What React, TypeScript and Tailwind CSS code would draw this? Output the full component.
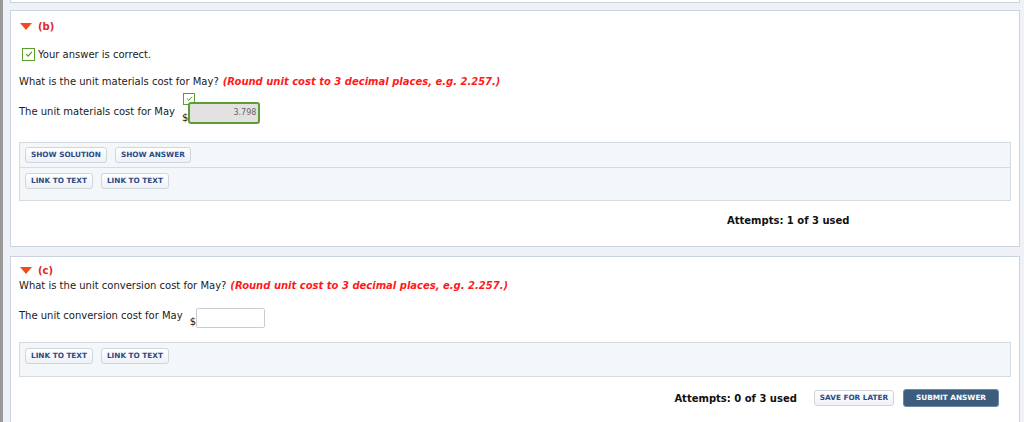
import React from 'react';

const font = { fontFamily: '"DejaVu Sans", Verdana, sans-serif' };

const Triangle = () => (
  <svg width="12" height="7" viewBox="0 0 12 7" className="shrink-0">
    <polygon points="0,0 12,0 6,7" fill="#f24a1d" />
  </svg>
);

const CheckBox: React.FC<{ size: number }> = ({ size }) => (
  <span
    className="inline-flex items-center justify-center border border-[#5c9e2e] bg-white shrink-0"
    style={{ width: size, height: size }}
  >
    <svg width={size - 5} height={size - 5} viewBox="0 0 10 10">
      <path d="M1.5 5.2 L4 7.6 L8.6 2.4" fill="none" stroke="#4e9a2a" strokeWidth="1.4" />
    </svg>
  </span>
);

const Btn: React.FC<{ label: string }> = ({ label }) => (
  <span className="inline-flex items-center h-[16px] px-[5px] rounded-[3px] border border-[#cfd6de] bg-gradient-to-b from-white to-[#eef1f5] text-[7.3px] font-bold text-[#2a4a88] whitespace-nowrap">
    {label}
  </span>
);

const Hint = () => (
  <span className="text-[#ff1a1a] font-bold italic">
    (Round unit cost to 3 decimal places, e.g. 2.257.)
  </span>
);

export default function App() {
  return (
    <div className="w-[1024px] h-[422px] overflow-hidden bg-[#eef2f6] border-l-[3px] border-[#9a9a9a] text-[10px] text-[#1a1a1a]" style={font}>
      {/* previous panel bottom */}
      <div className="ml-[7px] mr-[4px] h-[3px] bg-white border-b border-x border-[#c9d4df]" />

      {/* part b */}
      <div className="ml-[7px] mr-[4px] mt-[7px] h-[237px] bg-white border border-[#c9d4df] px-[8px]">
        <div className="flex items-center gap-[6px] h-[14px] mt-[8px] pl-[1px]">
          <Triangle />
          <span className="text-[#e3262b] font-bold">(b)</span>
        </div>
        <div className="flex items-center gap-[3px] h-[14px] mt-[14px] pl-[3px]">
          <CheckBox size={13} />
          <span>Your answer is correct.</span>
        </div>
        <div className="h-[14px] mt-[13px] flex items-center gap-[4px]">
          <span>What is the unit materials cost for May?</span>
          <Hint />
        </div>
        <div className="flex items-end mt-[4px] h-[32px]">
          <span className="mb-[5px]">The unit materials cost for May</span>
          <span className="ml-[7px] mb-[-1px] text-[10px]">$</span>
          <div className="flex flex-col items-start">
            <span className="ml-[-5px] mb-[-4px]"><CheckBox size={12} /></span>
            <div className="w-[72px] h-[22px] rounded-[3px] border-2 border-[#5f9d32] bg-[#e2e2e2] flex items-center justify-end pr-[2px] text-[8px] text-[#666]">
              3.798
            </div>
          </div>
        </div>
        <div className="mt-[18px] border border-[#d4dbe3] bg-[#f4f7fa]">
          <div className="h-[25px] flex items-center gap-[8px] px-[5px] border-b border-[#d4dbe3]">
            <Btn label="SHOW SOLUTION" />
            <Btn label="SHOW ANSWER" />
          </div>
          <div className="h-[32px] pt-[5px] flex items-start gap-[8px] px-[5px]">
            <Btn label="LINK TO TEXT" />
            <Btn label="LINK TO TEXT" />
          </div>
        </div>
        <div className="h-[14px] mt-[12px] flex items-center pl-[708px] font-bold text-[#111]">
          Attempts: 1 of 3 used
        </div>
      </div>

      {/* part c */}
      <div className="ml-[7px] mr-[4px] mt-[9px] h-[200px] bg-white border border-[#c9d4df] px-[8px]">
        <div className="flex items-center gap-[6px] h-[14px] mt-[6px] pl-[1px]">
          <Triangle />
          <span className="text-[#e3262b] font-bold">(c)</span>
        </div>
        <div className="h-[14px] mt-[1px] flex items-center gap-[4px]">
          <span>What is the unit conversion cost for May?</span>
          <Hint />
        </div>
        <div className="flex items-end mt-[14px] h-[22px]">
          <span className="mb-[5px]">The unit conversion cost for May</span>
          <span className="ml-[7px] mb-[-1px]">$</span>
          <div className="w-[69px] h-[20px] rounded-[2px] border border-[#c8ccd0] bg-white" />
        </div>
        <div className="mt-[14px] h-[35px] border border-[#d4dbe3] bg-[#f4f7fa] flex items-start pt-[5px] gap-[8px] px-[5px]">
          <Btn label="LINK TO TEXT" />
          <Btn label="LINK TO TEXT" />
        </div>
        <div className="h-[18px] mt-[12px] flex items-center justify-end gap-[17px] pr-[12px]">
          <span className="font-bold text-[#111]">Attempts: 0 of 3 used</span>
          <div className="flex items-center gap-[9px]">
            <Btn label="SAVE FOR LATER" />
            <span className="inline-flex items-center h-[18px] px-[12px] rounded-[3px] bg-[#3d5d7e] border border-[#6f89a3] text-[7.3px] font-bold text-white whitespace-nowrap">
              SUBMIT ANSWER
            </span>
          </div>
        </div>
      </div>
    </div>
  );
}
